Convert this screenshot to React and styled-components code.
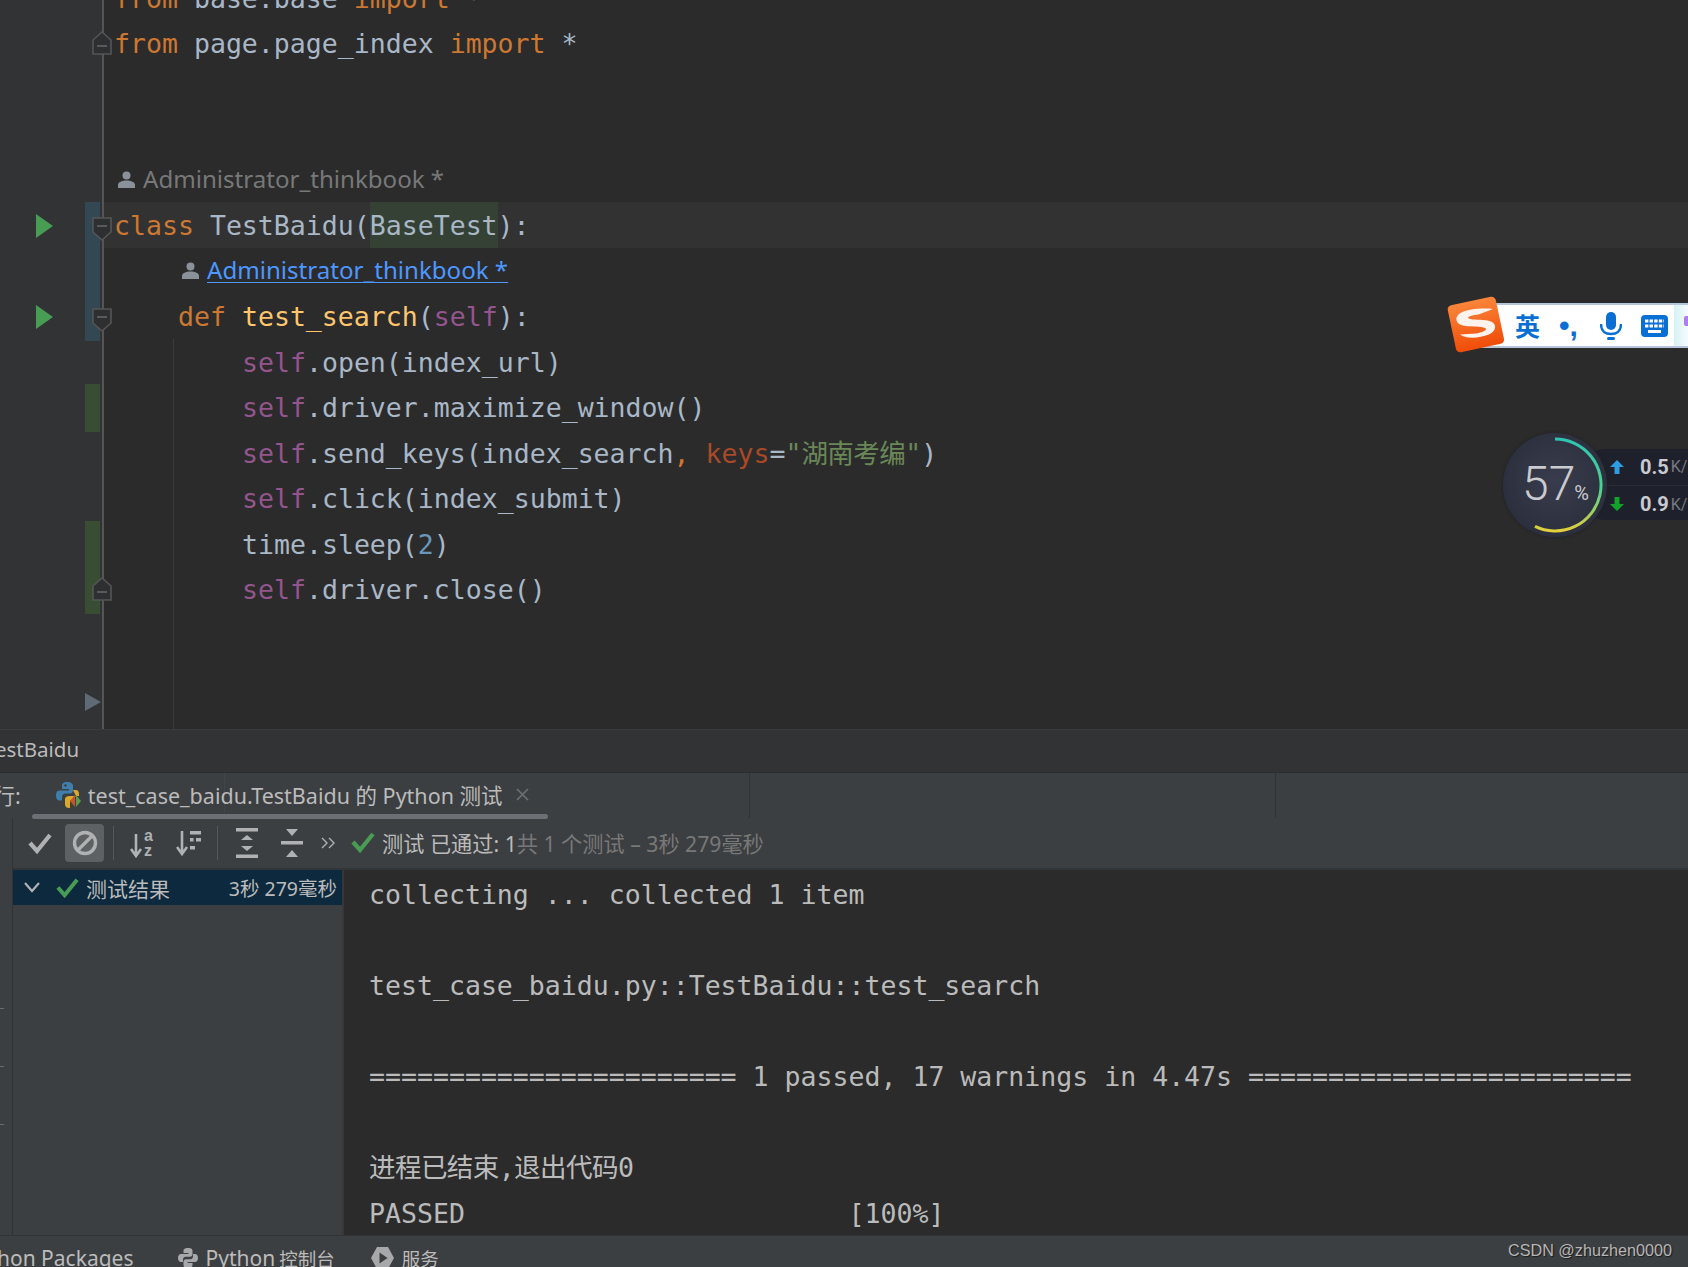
import React from "react";
import styled, { createGlobalStyle } from "styled-components";

const GlobalStyle = createGlobalStyle`
  html, body { margin: 0; padding: 0; background: #2b2b2b; }
`;

const MONO = `"DejaVu Sans Mono", "Noto Sans CJK SC", monospace`;
const UI = `"Noto Sans", "Noto Sans CJK SC", sans-serif`;

const TOKEN_COLORS = {
  kw: "#cc7832",
  self: "#94558d",
  fn: "#ffc66d",
  num: "#6897bb",
  str: "#6a8759",
  param: "#aa4926",
  text: "#a9b7c6",
};

const Page = styled.div`
  position: relative;
  width: 1688px;
  height: 1267px;
  overflow: hidden;
  display: flex;
  flex-direction: column;
  background: #2b2b2b;
  font-family: ${UI};
`;

/* ---- editor ---- */
const Editor = styled.div`
  height: 729px;
  flex: none;
  overflow: hidden;
`;

const EditorLines = styled.div`
  margin-top: -25.5px;
`;

const Row = styled.div`
  display: grid;
  grid-template-columns: 85px 17px 1fr;
  height: 45.5px;
  background: #313335;
`;

const Gutter = styled.div`
  display: flex;
  align-items: center;
  padding-left: 36px;
`;

const CHANGE_COLORS = { scope: "#344854", added: "#394d35" };

const ChangeBar = styled.div`
  position: relative;
  margin-right: 2px;
  background: ${(p) => CHANGE_COLORS[p.$mark] || "transparent"};
`;

const FoldIcon = styled.svg`
  position: absolute;
  left: 7px;
  top: ${(p) => (p.$up ? 11 : 15)}px;
  z-index: 2;
`;

const FoldArrow = styled.svg`
  position: absolute;
  left: 0;
  top: 36px;
  z-index: 2;
`;

const Code = styled.div`
  position: relative;
  border-left: 2px solid #555555;
  padding-left: ${(p) => 10 + p.$indent * 64}px;
  background: ${(p) => (p.$caret ? "#323232" : "#2b2b2b")};
  font-family: ${MONO};
  font-size: 26.56px;
  line-height: 48px;
  color: #a9b7c6;
  white-space: pre;

  ${(p) =>
    p.$guide &&
    `&::before {
      content: "";
      position: absolute;
      left: 69px;
      top: 0;
      bottom: 0;
      width: 1px;
      background: #3b3b3b;
    }`}
`;

const Tok = styled.span`
  color: ${(p) => TOKEN_COLORS[p.$k] || TOKEN_COLORS.text};
  background: ${(p) => (p.$hl ? "#344134" : "transparent")};
  display: ${(p) => (p.$hl ? "inline-block" : "inline")};
  height: ${(p) => (p.$hl ? "45.5px" : "auto")};
  vertical-align: top;
  letter-spacing: ${(p) => (p.$cjk ? "-0.6px" : "0")};
`;

const Lens = styled.div`
  display: flex;
  align-items: center;
  height: 100%;
  margin-top: -1px;
  margin-left: 4px;
  gap: 8px;
  font-family: ${UI};
  font-size: 24.1px;
  color: #787878;
`;

const LensLink = styled.a`
  color: #4d97ff;
  text-decoration: underline;
  text-underline-offset: 3px;
  text-decoration-thickness: 1px;
`;

/* ---- tool window ---- */
const Breadcrumb = styled.div`
  height: 42px;
  flex: none;
  display: flex;
  align-items: center;
  background: #313335;
  border-top: 1px solid #3a3b3d;
  overflow: hidden;
  font-size: 20.5px;
  color: #bbbbbb;
`;

const BreadcrumbText = styled.span`
  margin-left: -15px;
  margin-top: -4px;
  white-space: nowrap;
`;

const TabBar = styled.div`
  position: relative;
  height: 46px;
  flex: none;
  display: flex;
  align-items: center;
  box-sizing: border-box;
  padding-bottom: 2px;
  background-color: #3c3f41;
  background-image: linear-gradient(#424547, #424547), linear-gradient(#323232, #323232),
    linear-gradient(#323232, #323232);
  background-size: 1px 100%;
  background-position: 224px 0, 749px 0, 1275px 0;
  background-repeat: no-repeat;
  border-top: 1px solid #2d2d2d;
  font-size: 21.5px;
  color: #bbbbbb;
  white-space: nowrap;
`;

const RunLabel = styled.span`
  margin-left: -28px;
`;

const TabIconWrap = styled.span`
  display: flex;
  margin-left: 35px;
`;

const TabTitle = styled.span`
  margin-left: 6px;
`;

const TabClose = styled.svg`
  margin-left: 13px;
`;

const TabUnderline = styled.div`
  position: absolute;
  left: 32px;
  width: 516px;
  bottom: -1px;
  height: 5px;
  border-radius: 3px;
  background: #6c7075;
`;

const RunBody = styled.div`
  flex: 1;
  display: flex;
  min-height: 0;
`;

const LeftStrip = styled.div`
  width: 13px;
  flex: none;
  display: flex;
  flex-direction: column;
  gap: 57px;
  padding-top: 190px;
  box-sizing: border-box;
  background: #3c3f41;
  border-right: 1px solid #323232;
`;

const StripTick = styled.div`
  width: 4px;
  height: 1px;
  background: #6a6d70;
`;

const RunMain = styled.div`
  flex: 1;
  min-width: 0;
  display: flex;
  flex-direction: column;
`;

const Toolbar = styled.div`
  height: 50px;
  flex: none;
  display: flex;
  align-items: center;
  padding-left: 7px;
  background: #3c3f41;
  border-bottom: 2px solid #323537;
  font-size: 21.2px;
`;

const ToolGroup = styled.div`
  display: flex;
  gap: ${(p) => p.$gap}px;
`;

const ToolButton = styled.div`
  width: 39px;
  height: 38px;
  display: flex;
  align-items: center;
  justify-content: center;
  border-radius: 4px;
  background: ${(p) => (p.$active ? "#5d6163" : "transparent")};
`;

const ToolSep = styled.div`
  width: 1px;
  height: 34px;
  margin: 0 9px;
  background: #55585a;
`;

const More = styled.svg`
  margin-left: 10px;
`;

const StatusText = styled.div`
  display: flex;
  align-items: center;
  margin-left: 16px;
  margin-top: -2px;
  gap: 7px;
  white-space: nowrap;
`;

const Passed = styled.span`
  color: #bbbbbb;
`;

const Muted = styled.span`
  color: #787878;
`;

const Split = styled.div`
  flex: 1;
  min-height: 0;
  display: flex;
`;

const Tree = styled.div`
  width: 329px;
  flex: none;
  background: #3c3f41;
  border-right: 2px solid #353739;
`;

const TreeRow = styled.div`
  height: 35px;
  display: flex;
  align-items: center;
  padding: 0 5px 0 11px;
  background: #0d293e;
  font-size: 21px;
  color: #bbbbbb;
`;

const TreeLabel = styled.span`
  margin-left: 7px;
  flex: 1;
  white-space: nowrap;
`;

const TreeTime = styled.span`
  font-size: 19.5px;
  white-space: nowrap;
`;

const TreeCheck = styled.svg`
  margin-left: 16px;
`;

const Console = styled.div`
  flex: 1;
  min-width: 0;
  overflow: hidden;
  padding: 2px 0 0 25px;
  background: #2b2b2b;
  font-family: ${MONO};
  font-size: 26.56px;
  line-height: 45.5px;
  color: #bbbbbb;
  white-space: pre;
`;

const ConsoleLine = styled.div`
  height: 45.5px;
  letter-spacing: ${(p) => (p.$cjk ? "-0.6px" : "0")};
`;

const StatusBar = styled.div`
  height: 32px;
  flex: none;
  display: flex;
  align-items: center;
  padding-top: 12px;
  box-sizing: border-box;
  overflow: hidden;
  background: #3c3f41;
  border-top: 1px solid #323232;
  font-size: 21px;
  color: #bbbbbb;
  white-space: nowrap;
`;

const StatusItem = styled.div`
  display: flex;
  align-items: center;
  gap: 8px;
  margin-left: ${(p) => p.$left}px;
`;

const StatusCjk = styled.span`
  margin-left: ${(p) => p.$left || 0}px;
  font-size: 18.5px;
`;

const Watermark = styled.div`
  position: absolute;
  right: 16px;
  bottom: 7px;
  font-family: "Liberation Sans", sans-serif;
  font-size: 16.2px;
  color: #b6b6b6;
  text-shadow: 1px 1px 1px #1c1c1c;
`;

/* ---- floating widgets ---- */
const Ime = styled.div`
  position: absolute;
  left: 1465px;
  top: 303px;
  right: 0;
  height: 45px;
  box-sizing: border-box;
  display: flex;
  align-items: center;
  padding-left: 50px;
  background: #ffffff;
  border-top: 2px solid #b6c6d8;
  border-bottom: 2px solid #b6c6d8;
  color: #0a6fd4;
`;

const ImeLogo = styled.svg`
  position: absolute;
  left: -21px;
  top: -12px;
`;

const ImeWord = styled.span`
  font-family: "Noto Sans CJK SC", sans-serif;
  font-size: 25px;
  font-weight: 700;
  line-height: 1;
`;

const ImePunct = styled.span`
  width: 22px;
  margin-left: 19px;
  font-family: "Liberation Sans", sans-serif;
  font-size: 30px;
  font-weight: 700;
  line-height: 1;
  white-space: nowrap;
`;

const ImeIcon = styled.svg`
  margin-left: ${(p) => p.$left}px;
`;

const ImeSwatch = styled.div`
  position: absolute;
  right: 0;
  top: 0;
  bottom: 0;
  width: 14px;
  background: linear-gradient(90deg, #d6f3f4, #f6fbff);

  &::after {
    content: "";
    position: absolute;
    right: 0;
    top: 11px;
    width: 4px;
    height: 10px;
    border-radius: 2px 0 0 2px;
    background: #b07cf0;
  }
`;

const NetPanel = styled.div`
  position: absolute;
  left: 1590px;
  right: 0;
  top: 449px;
  height: 71px;
  border-radius: 14px 0 0 14px;
  background: #1e212b;
  display: grid;
  grid-template-rows: 1fr 1fr;
`;

const NetRow = styled.div`
  display: flex;
  align-items: center;
  padding-left: 20px;
  padding-top: ${(p) => (p.$divider ? 3 : 0)}px;
  border-top: ${(p) => (p.$divider ? "1px solid #2a2d38" : "0")};
  font-family: Roboto, sans-serif;
`;

const NetValue = styled.span`
  margin-left: 16px;
  font-size: 20px;
  font-weight: 700;
  color: #c9cbd0;
`;

const NetUnit = styled.span`
  margin-left: 2px;
  font-size: 16px;
  color: #777a82;
`;

const Gauge = styled.div`
  position: absolute;
  left: 1503px;
  top: 433px;
  width: 104px;
  height: 104px;
  border-radius: 50%;
  background: radial-gradient(circle at 50% 45%, #383c4c, #2b2f3d 75%);
  box-shadow: 0 0 3px #1d1f27;
`;

const GaugeRing = styled.svg`
  position: absolute;
  left: 0;
  top: 0;
`;

const GaugeLabel = styled.div`
  position: absolute;
  left: 19px;
  top: 21px;
  display: flex;
  align-items: baseline;
  font-family: Roboto, sans-serif;
  font-weight: 300;
  font-size: 48px;
  line-height: 60px;
  color: #c9cbd0;
`;

const GaugeUnit = styled.span`
  margin-left: -1px;
  font-size: 20px;
  font-weight: 400;
`;

/* ---- icons ---- */
const RunArrow = () => (
  <svg width="17" height="24" viewBox="0 0 17 24">
    <path d="M0 0 L17 12 L0 24 Z" fill="#499c54" />
  </svg>
);

const Fold = ({ up }) => (
  <FoldIcon $up={up} width="20" height="24" viewBox="0 0 20 24">
    <path
      d={up ? "M1 23 V9 L10 1 L19 9 V23 Z" : "M1 1 V15 L10 23 L19 15 V1 Z"}
      fill="#2e2f31"
      stroke="#555555"
      strokeWidth="1.6"
    />
    <path d={up ? "M5 15 H15" : "M5 9 H15"} stroke="#666666" strokeWidth="1.6" />
  </FoldIcon>
);

const PersonIcon = () => (
  <svg width="17" height="17" viewBox="0 0 17 17" fill="#8a9199">
    <circle cx="8.5" cy="4.5" r="4" />
    <path d="M0 17 V14 C0 11 4 9.5 8.5 9.5 C13 9.5 17 11 17 14 V17 Z" />
  </svg>
);

const CheckMark = ({ color = "#afb1b3", size = 24 }) => (
  <svg width={size} height={size} viewBox="0 0 24 24">
    <path d="M2 12 L9 20 L22 4" fill="none" stroke={color} strokeWidth="4.2" />
  </svg>
);

const BlockIcon = () => (
  <svg width="26" height="26" viewBox="0 0 26 26" fill="none" stroke="#afb1b3" strokeWidth="3.4">
    <circle cx="13" cy="13" r="10.5" />
    <path d="M6 20 L20 6" />
  </svg>
);

const SortAlphaIcon = () => (
  <svg width="25" height="30" viewBox="0 0 25 30">
    <path d="M6 6 V27 M1 21 L6 28 L11 21" fill="none" stroke="#afb1b3" strokeWidth="2.6" />
    <text x="14" y="13" fontFamily="Liberation Sans" fontWeight="700" fontSize="16" fill="#afb1b3">a</text>
    <text x="14" y="28" fontFamily="Liberation Sans" fontWeight="700" fontSize="16" fill="#afb1b3">z</text>
  </svg>
);

const SortBarsIcon = () => (
  <svg width="25" height="26" viewBox="0 0 25 26" fill="#afb1b3">
    <path d="M6 1 V23 M1 17 L6 24 L11 17" fill="none" stroke="#afb1b3" strokeWidth="2.6" />
    <rect x="14" y="1" width="11" height="3.5" />
    <rect x="14" y="8" width="3.5" height="3.5" />
    <rect x="20" y="8" width="5" height="3.5" />
    <rect x="14" y="16" width="5" height="3.5" />
  </svg>
);

const ExpandIcon = () => (
  <svg width="22" height="30" viewBox="0 0 22 30" fill="#afb1b3">
    <rect x="0" y="0" width="22" height="3.5" />
    <path d="M11 7 L17 12 H5 Z" />
    <path d="M11 23 L17 18 H5 Z" />
    <rect x="0" y="26.5" width="22" height="3.5" />
  </svg>
);

const CollapseIcon = () => (
  <svg width="22" height="30" viewBox="0 0 22 30" fill="#afb1b3">
    <path d="M5 1 H17 L11 8 Z" />
    <rect x="0" y="13" width="22" height="3.5" />
    <path d="M5 29 H17 L11 22 Z" />
  </svg>
);

const PythonTabIcon = () => (
  <svg width="26" height="26" viewBox="0 0 26 26">
    <path d="M11 0 C7 0 6 2 6 4 V7 H13 V8.5 H3 C1 8.5 0 11 0 13.5 C0 16 1 18.5 3 18.5 H6 V15 C6 13 7.5 11.5 9.5 11.5 H14 C16 11.5 17 10 17 8.5 V4 C17 2 15 0 11 0 Z" fill="#3f7fae" />
    <circle cx="9.5" cy="3.5" r="1.3" fill="#3c3f41" />
    <path d="M17 8 H20 C22 8 23 10 23 12 V14 H14 C11 14 9 15 9 17 V22 C9 25 11 26 13 26 H14 V19 L20 14 Z" fill="#d9a92e" />
    <path d="M19 13 L14 19 L19 25 Z" fill="#c8532d" />
    <path d="M20 13 L25 19 L20 25 Z" fill="#5a9e4b" />
  </svg>
);

const PythonGreyIcon = () => (
  <svg width="20" height="20" viewBox="0 0 20 20" fill="#a6a8aa">
    <path d="M10 0 C6.5 0 5.5 1.4 5.5 3 V5 H10.5 V6 H3 C1 6 0 7.8 0 10 C0 12.2 1 14 3 14 H5 V11.5 C5 10 6.2 8.8 7.7 8.8 H12 C13.5 8.8 14.5 7.8 14.5 6.3 V3 C14.5 1.3 13.5 0 10 0 Z" />
    <path d="M10 20 C13.5 20 14.5 18.6 14.5 17 V15 H9.5 V14 H17 C19 14 20 12.2 20 10 C20 7.8 19 6 17 6 H15 V8.5 C15 10 13.8 11.2 12.3 11.2 H8 C6.5 11.2 5.5 12.2 5.5 13.7 V17 C5.5 18.7 6.5 20 10 20 Z" />
  </svg>
);

const ServiceIcon = () => (
  <svg width="23" height="22" viewBox="0 0 23 22">
    <path d="M6 0 H17 L23 11 L17 22 H6 L0 11 Z" fill="#a6a8aa" />
    <path d="M8.5 5.5 L16.5 11 L8.5 16.5 Z" fill="#3c3f41" />
  </svg>
);

const SogouLogo = () => (
  <ImeLogo width="64" height="64" viewBox="0 0 60 60">
    <defs>
      <linearGradient id="sogou" x1="0" y1="0" x2="0" y2="1">
        <stop offset="0" stopColor="#f9853a" />
        <stop offset="1" stopColor="#f04d08" />
      </linearGradient>
    </defs>
    <rect x="7" y="7" width="46" height="45" rx="4" transform="rotate(-12 30 30)" fill="url(#sogou)" />
    <path
      d="M46 15 C36 14 22 15 15 19 C9 23 11 30 20 31 C27 32 34 31 39 33 C41 35 35 37 30 38 L15 39 C22 44 34 42 42 39 C50 35 50 28 42 26 C35 24 27 26 23 24 C21 22 27 21 33 20 Z"
      fill="#fdf3ec"
    />
  </ImeLogo>
);

/* ---- data ---- */
const PLAIN = "text";
const LINES = [
  { tokens: [["kw", "from "], [PLAIN, "base.base "], ["kw", "import "], [PLAIN, "*"]] },
  { fold: "up", tokens: [["kw", "from "], [PLAIN, "page.page_index "], ["kw", "import "], [PLAIN, "*"]] },
  {},
  {},
  { lens: "Administrator_thinkbook *" },
  {
    run: true,
    caret: true,
    mark: "scope",
    fold: "down",
    tokens: [["kw", "class "], [PLAIN, "TestBaidu("], [PLAIN, "BaseTest", "hl"], [PLAIN, "):"]],
  },
  { mark: "scope", indent: 1, link: "Administrator_thinkbook *" },
  {
    run: true,
    mark: "scope",
    fold: "down",
    indent: 1,
    tokens: [["kw", "def "], ["fn", "test_search"], [PLAIN, "("], ["self", "self"], [PLAIN, "):"]],
  },
  { guide: true, indent: 2, tokens: [["self", "self"], [PLAIN, ".open(index_url)"]] },
  { guide: true, mark: "added", indent: 2, tokens: [["self", "self"], [PLAIN, ".driver.maximize_window()"]] },
  {
    guide: true,
    indent: 2,
    tokens: [
      ["self", "self"],
      [PLAIN, ".send_keys(index_search"],
      ["kw", ", "],
      ["param", "keys"],
      [PLAIN, "="],
      ["str", '"'],
      ["str", "湖南考编", "cjk"],
      ["str", '"'],
      [PLAIN, ")"],
    ],
  },
  { guide: true, indent: 2, tokens: [["self", "self"], [PLAIN, ".click(index_submit)"]] },
  { guide: true, mark: "added", indent: 2, tokens: [[PLAIN, "time.sleep("], ["num", "2"], [PLAIN, ")"]] },
  { guide: true, mark: "added", fold: "up", indent: 2, tokens: [["self", "self"], [PLAIN, ".driver.close()"]] },
  { guide: true },
  { guide: true, arrow: true },
  { guide: true },
];

const CONSOLE = [
  { text: "collecting ... collected 1 item" },
  { text: "" },
  { text: "test_case_baidu.py::TestBaidu::test_search" },
  { text: "" },
  { text: "======================= 1 passed, 17 warnings in 4.47s ========================" },
  { text: "" },
  { text: "进程已结束,退出代码0", cjk: true },
  { text: "PASSED                        [100%]" },
];

const EditorLine = ({ line }) => (
  <Row>
    <Gutter>{line.run && <RunArrow />}</Gutter>
    <ChangeBar $mark={line.mark}>
      {line.fold && <Fold up={line.fold === "up"} />}
      {line.arrow && (
        <FoldArrow width="16" height="18" viewBox="0 0 16 18">
          <path d="M0 0 L16 9 L0 18 Z" fill="#5f6a75" />
        </FoldArrow>
      )}
    </ChangeBar>
    <Code $indent={line.indent || 0} $caret={line.caret} $guide={line.guide}>
      {line.lens && (
        <Lens>
          <PersonIcon />
          <span>{line.lens}</span>
        </Lens>
      )}
      {line.link && (
        <Lens>
          <PersonIcon />
          <LensLink>{line.link}</LensLink>
        </Lens>
      )}
      {line.tokens &&
        line.tokens.map(([kind, text, flag], i) => (
          <Tok key={i} $k={kind} $hl={flag === "hl"} $cjk={flag === "cjk"}>
            {text}
          </Tok>
        ))}
    </Code>
  </Row>
);

const App = () => (
  <Page>
    <GlobalStyle />
    <Editor>
      <EditorLines>
        {LINES.map((line, i) => (
          <EditorLine key={i} line={line} />
        ))}
      </EditorLines>
    </Editor>

    <Breadcrumb>
      <BreadcrumbText>TestBaidu</BreadcrumbText>
    </Breadcrumb>

    <TabBar>
      <RunLabel>运行:</RunLabel>
      <TabIconWrap>
        <PythonTabIcon />
      </TabIconWrap>
      <TabTitle>test_case_baidu.TestBaidu 的 Python 测试</TabTitle>
      <TabClose width="13" height="13" viewBox="0 0 13 13">
        <path d="M1 1 L12 12 M12 1 L1 12" stroke="#6e7173" strokeWidth="1.6" />
      </TabClose>
      <TabUnderline />
    </TabBar>

    <RunBody>
      <LeftStrip>
        <StripTick />
        <StripTick />
        <StripTick />
      </LeftStrip>
      <RunMain>
        <Toolbar>
          <ToolGroup $gap={6}>
            <ToolButton>
              <CheckMark />
            </ToolButton>
            <ToolButton $active>
              <BlockIcon />
            </ToolButton>
          </ToolGroup>
          <ToolSep />
          <ToolGroup $gap={7}>
            <ToolButton>
              <SortAlphaIcon />
            </ToolButton>
            <ToolButton>
              <SortBarsIcon />
            </ToolButton>
          </ToolGroup>
          <ToolSep />
          <ToolGroup $gap={6}>
            <ToolButton>
              <ExpandIcon />
            </ToolButton>
            <ToolButton>
              <CollapseIcon />
            </ToolButton>
          </ToolGroup>
          <More width="14" height="12" viewBox="0 0 14 12" fill="none" stroke="#afb1b3" strokeWidth="1.4">
            <path d="M1 1 L6 6 L1 11 M8 1 L13 6 L8 11" />
          </More>
          <StatusText>
            <CheckMark color="#499c54" />
            <span>
              <Passed>测试 已通过: 1</Passed>
              <Muted>共 1 个测试 – 3秒 279毫秒</Muted>
            </span>
          </StatusText>
        </Toolbar>
        <Split>
          <Tree>
            <TreeRow>
              <svg width="16" height="11" viewBox="0 0 16 11">
                <path d="M1 1 L8 9 L15 1" fill="none" stroke="#afb1b3" strokeWidth="2.2" />
              </svg>
              <TreeCheck width="23" height="23" viewBox="0 0 24 24">
                <path d="M2 12 L9 20 L22 4" fill="none" stroke="#499c54" strokeWidth="4.2" />
              </TreeCheck>
              <TreeLabel>测试结果</TreeLabel>
              <TreeTime>3秒 279毫秒</TreeTime>
            </TreeRow>
          </Tree>
          <Console>
            {CONSOLE.map((line, i) => (
              <ConsoleLine key={i} $cjk={line.cjk}>
                {line.text}
              </ConsoleLine>
            ))}
          </Console>
        </Split>
      </RunMain>
    </RunBody>

    <StatusBar>
      <StatusItem $left={-34}>Python Packages</StatusItem>
      <StatusItem $left={44}>
        <PythonGreyIcon />
        <span>
          Python<StatusCjk $left={4}>控制台</StatusCjk>
        </span>
      </StatusItem>
      <StatusItem $left={36}>
        <ServiceIcon />
        <StatusCjk>服务</StatusCjk>
      </StatusItem>
    </StatusBar>
    <Watermark>CSDN @zhuzhen0000</Watermark>

    <Ime>
      <SogouLogo />
      <ImeWord>英</ImeWord>
      <ImePunct>•,</ImePunct>
      <ImeIcon $left={19} width="22" height="28" viewBox="0 0 22 28" fill="#0a6fd4">
        <rect x="6" y="0" width="10" height="18" rx="5" />
        <path d="M1 12 C1 20 6 22 11 22 C16 22 21 20 21 12" fill="none" stroke="#0a6fd4" strokeWidth="2.4" />
        <rect x="7" y="25" width="8" height="3" rx="1.5" />
      </ImeIcon>
      <ImeIcon $left={19} width="27" height="22" viewBox="0 0 27 22">
        <rect x="0" y="0" width="27" height="22" rx="4" fill="#0a6fd4" />
        <path d="M4 6 H23 M4 11 H23" stroke="#ffffff" strokeWidth="3" strokeDasharray="3.4 1.2" />
        <path d="M7 16.5 H20" stroke="#ffffff" strokeWidth="3" />
      </ImeIcon>
      <ImeSwatch />
    </Ime>

    <NetPanel>
      <NetRow>
        <svg width="14" height="14" viewBox="0 0 14 14" fill="#2f9be0">
          <path d="M7 0 L14 7 H9.5 V14 H4.5 V7 H0 Z" />
        </svg>
        <NetValue>0.5</NetValue>
        <NetUnit>K/S</NetUnit>
      </NetRow>
      <NetRow $divider>
        <svg width="14" height="14" viewBox="0 0 14 14" fill="#12a32b">
          <path d="M7 14 L0 7 H4.5 V0 H9.5 V7 H14 Z" />
        </svg>
        <NetValue>0.9</NetValue>
        <NetUnit>K/S</NetUnit>
      </NetRow>
    </NetPanel>

    <Gauge>
      <GaugeRing width="104" height="104" viewBox="0 0 104 104">
        <defs>
          <linearGradient id="ring" x1="0" y1="0" x2="0" y2="1">
            <stop offset="0" stopColor="#2fc4b2" />
            <stop offset="0.55" stopColor="#4fd08f" />
            <stop offset="1" stopColor="#e3cf3a" />
          </linearGradient>
        </defs>
        <path d="M52 6 A46 46 0 1 1 32 93.4" fill="none" stroke="url(#ring)" strokeWidth="3" />
      </GaugeRing>
      <GaugeLabel>
        57<GaugeUnit>%</GaugeUnit>
      </GaugeLabel>
    </Gauge>
  </Page>
);

export default App;
